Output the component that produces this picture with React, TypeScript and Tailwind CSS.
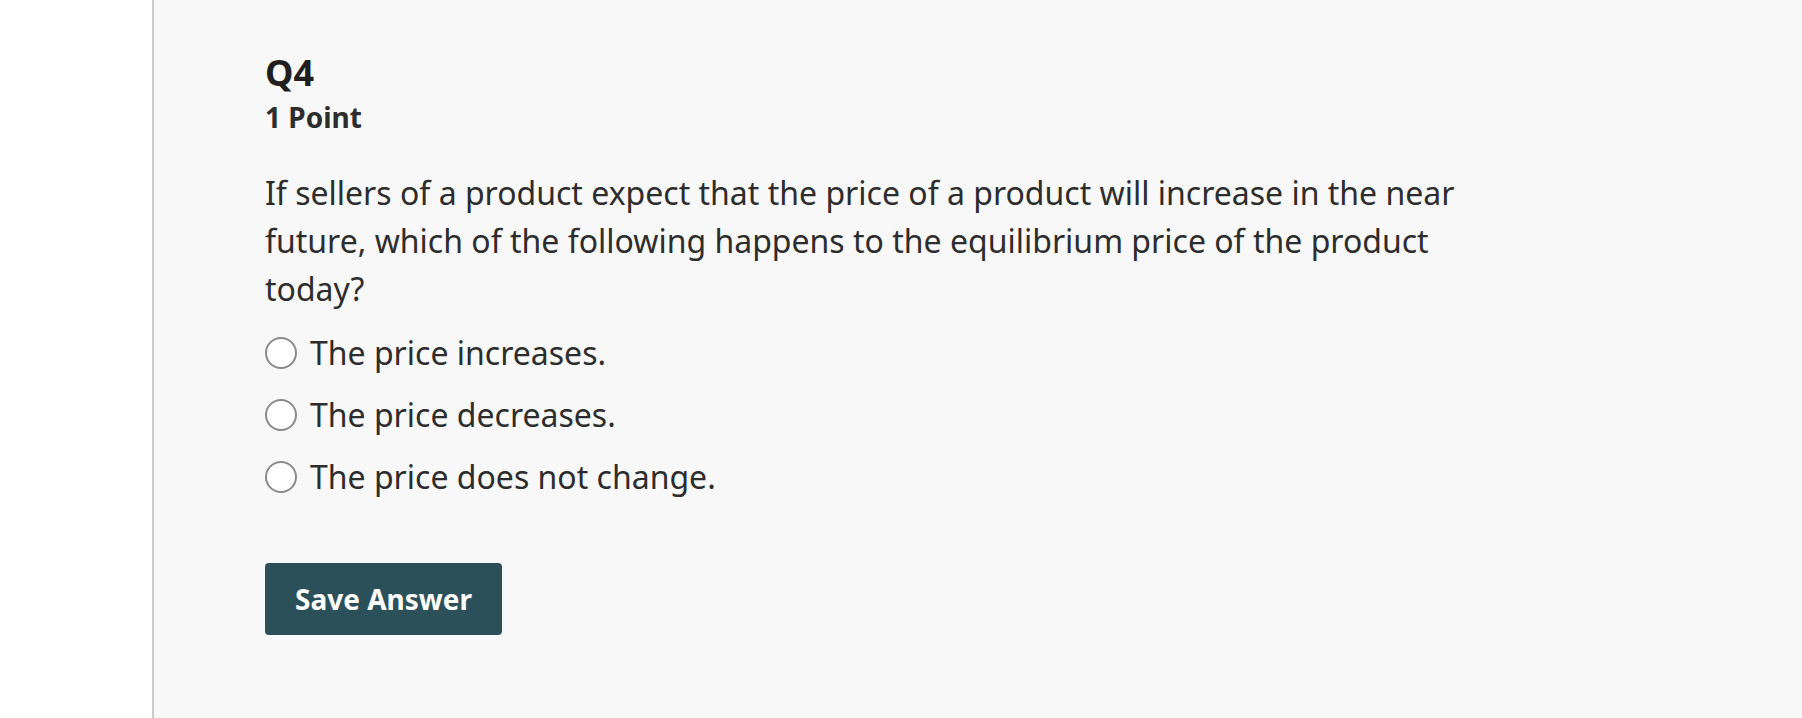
const options = [
  'The price increases.',
  'The price decreases.',
  'The price does not change.',
];

export default function App() {
  return (
    <div
      className="flex h-[718px] w-full bg-white text-[#2d2d2d]"
      style={{ fontFamily: '"Noto Sans", "Open Sans", sans-serif' }}
    >
      <div className="w-[152px] shrink-0 bg-white" />
      <main className="flex-1 border-l-2 border-[#cdcdcd] bg-[#f8f8f8] pl-[111px] pt-[50px]">
        <h2 className="text-[36px] font-bold leading-[45px] text-[#1f1f1f]">Q4</h2>
        <div className="mt-[4px] text-[28px] font-bold leading-[36px] text-[#2d2d2d]">1 Point</div>

        <p className="mt-[34px] max-w-[1220px] text-[32px] leading-[48px]">
          If sellers of a product expect that the price of a product will increase in the near
          future, which of the following happens to the equilibrium price of the product today?
        </p>

        <fieldset className="mt-[16px] flex flex-col gap-[14px]">
          {options.map((opt) => (
            <label key={opt} className="flex items-center gap-[13px] text-[32px] leading-[48px]">
              <span className="h-[32px] w-[32px] shrink-0 rounded-full border-2 border-[#8a8a8a] bg-white" />
              <span>{opt}</span>
            </label>
          ))}
        </fieldset>

        <button className="mt-[62px] h-[72px] rounded-[4px] bg-[#2c505a] px-[30px] text-[28px] font-bold leading-[40px] text-white">
          Save Answer
        </button>
      </main>
    </div>
  );
}
